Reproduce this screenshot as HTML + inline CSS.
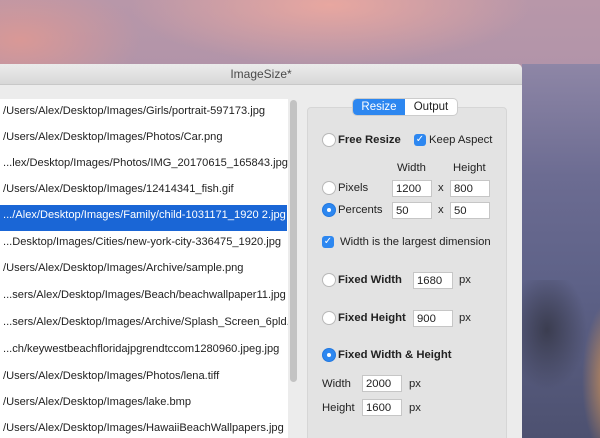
<!DOCTYPE html><html><head><style>
body{margin:0;width:600px;height:438px;overflow:hidden;position:relative;font-family:"Liberation Sans",sans-serif;
background:radial-gradient(ellipse 200px 60px at 330px 5px,#e8a7a0,transparent),radial-gradient(ellipse 120px 60px at 20px 40px,#d99896,transparent),linear-gradient(180deg,#b897a9 0%,#a48ea8 50%,#8c83a2 100%);}
.bg2{position:absolute;left:522px;top:64px;width:78px;height:374px;background:linear-gradient(180deg,#8e86a6 0%,#6c6c92 30%,#5d6187 60%,#4d5170 100%)}
.bg3{position:absolute;left:522px;top:280px;width:78px;height:158px;background:radial-gradient(ellipse 30px 80px at 90px 100px,#d39355,transparent),radial-gradient(ellipse 40px 60px at 25px 50px,#3b3d50,transparent)}
.win{position:absolute;left:0;top:64px;width:522px;height:374px;background:#ececec;border-radius:0 5px 0 0;overflow:hidden}
.tb{height:20px;background:linear-gradient(#ebebeb,#d8d8d8);border-bottom:1px solid #c8c8c8;text-align:center;font-size:12px;line-height:20px;color:#4a4a4a}
.list{position:absolute;left:0;top:35px;width:288px;height:339px;background:#fff;overflow:hidden}
.row{position:absolute;left:3px;font-size:11.1px;line-height:14px;color:#222;white-space:nowrap}
.sel{position:absolute;left:0;top:106px;width:287px;height:26px;background:#1a66d6}
.sb{position:absolute;left:290px;top:36px;width:7px;height:282px;background:#c3c3c3;border-radius:4px}
.box{position:absolute;left:307px;top:43px;width:198px;height:340px;background:#e3e3e3;border:1px solid #d6d6d6;border-radius:4px}
.seg{position:absolute;left:353px;top:35px;width:104px;height:16px;border-radius:4px;background:#fff;box-shadow:0 0 0 1px #ccc;font-size:11.5px;line-height:16px}
.seg span{position:absolute;top:0;text-align:center}
.t{position:absolute;font-size:11.3px;line-height:14px;color:#222;white-space:nowrap}
.b{font-weight:bold}
.r{position:absolute;width:12px;height:12px;border-radius:50%;background:#fff;box-shadow:0 0 0 1px #b8b8b8}
.r.on{background:#2d87f0;box-shadow:0 0 0 1px #2278e0}
.r.on:after{content:"";position:absolute;left:4px;top:4px;width:4px;height:4px;border-radius:50%;background:#fff}
.c{position:absolute;width:12px;height:12px;border-radius:3px;background:#2d87f0;color:#fff;font-size:10px;line-height:12px;text-align:center}
.in{position:absolute;height:17px;background:#fff;border:1px solid #c6c6c6;box-sizing:border-box;font-size:11.3px;line-height:16px;padding-left:3px;color:#222}
</style></head><body>
<div class="bg2"></div><div class="bg3"></div>
<div class="win">
<div class="tb">ImageSize*</div>
<div class="list">
<div class="sel"></div>
<div class="row" style="top:5px">/Users/Alex/Desktop/Images/Girls/portrait-597173.jpg</div>
<div class="row" style="top:31px">/Users/Alex/Desktop/Images/Photos/Car.png</div>
<div class="row" style="top:57px">...lex/Desktop/Images/Photos/IMG_20170615_165843.jpg</div>
<div class="row" style="top:83px">/Users/Alex/Desktop/Images/12414341_fish.gif</div>
<div class="row" style="top:109px;color:#fff">.../Alex/Desktop/Images/Family/child-1031171_1920 2.jpg</div>
<div class="row" style="top:136px">...Desktop/Images/Cities/new-york-city-336475_1920.jpg</div>
<div class="row" style="top:162px">/Users/Alex/Desktop/Images/Archive/sample.png</div>
<div class="row" style="top:189px">...sers/Alex/Desktop/Images/Beach/beachwallpaper11.jpg</div>
<div class="row" style="top:216px">...sers/Alex/Desktop/Images/Archive/Splash_Screen_6pld.png</div>
<div class="row" style="top:243px">...ch/keywestbeachfloridajpgrendtccom1280960.jpeg.jpg</div>
<div class="row" style="top:270px">/Users/Alex/Desktop/Images/Photos/lena.tiff</div>
<div class="row" style="top:296px">/Users/Alex/Desktop/Images/lake.bmp</div>
<div class="row" style="top:322px">/Users/Alex/Desktop/Images/HawaiiBeachWallpapers.jpg</div>
</div>
<div class="sb"></div>
<div class="box"></div>
<div class="seg"><span style="left:0;width:52px;background:#2d87f0;color:#fff;border-radius:4px 0 0 4px">Resize</span><span style="left:52px;width:52px;color:#222">Output</span></div>
<div class="r" style="left:323px;top:70px"></div><div class="t b" style="left:338px;top:69px">Free Resize</div>
<div class="c" style="left:414px;top:70px">✓</div><div class="t" style="left:429px;top:69px">Keep Aspect</div>
<div class="t" style="left:397px;top:97px">Width</div><div class="t" style="left:453px;top:97px">Height</div>
<div class="r" style="left:323px;top:118px"></div><div class="t" style="left:338px;top:117px">Pixels</div>
<div class="in" style="left:392px;top:116px;width:40px">1200</div><div class="t" style="left:438px;top:117px">x</div><div class="in" style="left:450px;top:116px;width:40px">800</div>
<div class="r on" style="left:323px;top:140px"></div><div class="t" style="left:338px;top:139px">Percents</div>
<div class="in" style="left:392px;top:138px;width:40px">50</div><div class="t" style="left:438px;top:139px">x</div><div class="in" style="left:450px;top:138px;width:40px">50</div>
<div class="c" style="left:322px;top:172px">✓</div><div class="t" style="left:340px;top:171px">Width is the largest dimension</div>
<div class="r" style="left:323px;top:210px"></div><div class="t b" style="left:338px;top:209px">Fixed Width</div>
<div class="in" style="left:413px;top:208px;width:40px">1680</div><div class="t" style="left:459px;top:209px">px</div>
<div class="r" style="left:323px;top:248px"></div><div class="t b" style="left:338px;top:247px">Fixed Height</div>
<div class="in" style="left:413px;top:246px;width:40px">900</div><div class="t" style="left:459px;top:247px">px</div>
<div class="r on" style="left:323px;top:285px"></div><div class="t b" style="left:338px;top:284px">Fixed Width &amp; Height</div>
<div class="t" style="left:322px;top:313px">Width</div><div class="in" style="left:362px;top:311px;width:40px">2000</div><div class="t" style="left:409px;top:313px">px</div>
<div class="t" style="left:322px;top:337px">Height</div><div class="in" style="left:362px;top:335px;width:40px">1600</div><div class="t" style="left:409px;top:337px">px</div>
</div>
</body></html>
